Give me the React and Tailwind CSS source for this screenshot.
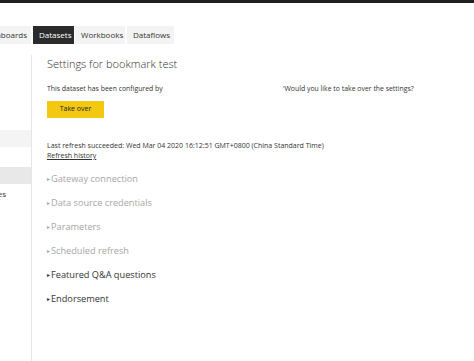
export default function App() {
  const sections = [
    { label: 'Gateway connection', muted: true },
    { label: 'Data source credentials', muted: true },
    { label: 'Parameters', muted: true },
    { label: 'Scheduled refresh', muted: true },
    { label: 'Featured Q&A questions', muted: false },
    { label: 'Endorsement', muted: false },
  ];

  return (
    <div className="w-[474px] h-[361px] bg-white overflow-hidden flex flex-col font-['Open_Sans',sans-serif]">
      <div className="h-[3px] bg-[#1f1f1f]" />

      {/* Tabs */}
      <div className="flex mt-[23px] h-[18px] text-[8px] leading-[18px] text-[#333]">
        <div className="bg-[#f3f3f3] pr-[4px] w-[31px] overflow-hidden whitespace-nowrap flex justify-end">Dashboards</div>
        <div className="ml-[2px] bg-[#2b2b2b] text-white px-[6px] w-[41px]">Datasets</div>
        <div className="ml-[1px] bg-[#f3f3f3] px-[6px] w-[50px]">Workbooks</div>
        <div className="ml-[2px] bg-[#f3f3f3] px-[6px] w-[47px]">Dataflows</div>
      </div>

      <div className="flex flex-1 mt-[11px]">
        {/* Sidebar */}
        <div className="w-[32px] border-r border-[#e6e6e6] flex flex-col text-[8px] text-[#333]">
          <div className="h-[75px]" />
          <div className="h-[17px] bg-[#f4f4f4]" />
          <div className="h-[20px]" />
          <div className="h-[17px] bg-[#e8e8e8]" />
          <div className="h-[20px] leading-[20px] whitespace-nowrap flex justify-end overflow-hidden pr-[25px]">es</div>
        </div>

        {/* Main */}
        <div className="flex-1 pl-[15px] pt-[1px]">
          <h1 className="text-[11px] font-light text-[#333] leading-[16px]">Settings for bookmark test</h1>
          <div className="mt-[12px] flex text-[6.9px] text-[#333] leading-[9px]">
            <span className="w-[236px]">This dataset has been configured by</span>
            <span>'Would you like to take over the settings?</span>
          </div>
          <button className="mt-[8px] w-[57px] h-[17px] bg-[#f2c811] text-[7px] text-[#222]">Take over</button>
          <div className="mt-[23px] text-[7px] text-[#333] leading-[10px]">
            <div>Last refresh succeeded: Wed Mar 04 2020 16:12:51 GMT+0800 (China Standard Time)</div>
            <div className="underline">Refresh history</div>
          </div>
          <div className="mt-[6px] flex flex-col">
            {sections.map((s) => (
              <div
                key={s.label}
                className={`h-[24px] flex items-center text-[9.2px] ${s.muted ? 'text-[#a6a6a6]' : 'text-[#333]'}`}
              >
                <span className="text-[6px] mr-[1px]">&#9656;</span>
                {s.label}
              </div>
            ))}
          </div>
        </div>
      </div>
    </div>
  );
}
